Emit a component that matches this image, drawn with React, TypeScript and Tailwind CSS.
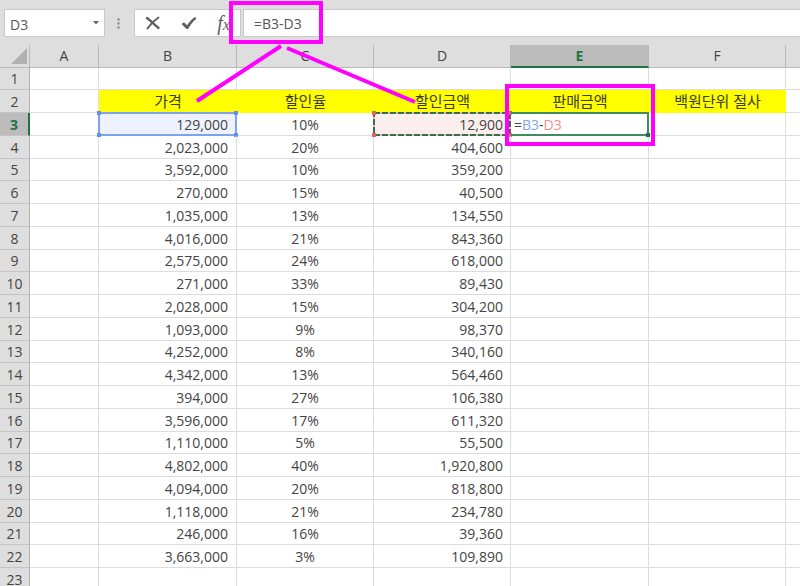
import React from "react";

const columns = ["A", "B", "C", "D", "E", "F", "G"];

const titles: Record<string, string> = {
  B: "가격",
  C: "할인율",
  D: "할인금액",
  E: "판매금액",
  F: "백원단위 절사",
};

const records: [string, string, string][] = [
  ["129,000", "10%", "12,900"],
  ["2,023,000", "20%", "404,600"],
  ["3,592,000", "10%", "359,200"],
  ["270,000", "15%", "40,500"],
  ["1,035,000", "13%", "134,550"],
  ["4,016,000", "21%", "843,360"],
  ["2,575,000", "24%", "618,000"],
  ["271,000", "33%", "89,430"],
  ["2,028,000", "15%", "304,200"],
  ["1,093,000", "9%", "98,370"],
  ["4,252,000", "8%", "340,160"],
  ["4,342,000", "13%", "564,460"],
  ["394,000", "27%", "106,380"],
  ["3,596,000", "17%", "611,320"],
  ["1,110,000", "5%", "55,500"],
  ["4,802,000", "40%", "1,920,800"],
  ["4,094,000", "20%", "818,800"],
  ["1,118,000", "21%", "234,780"],
  ["246,000", "16%", "39,360"],
  ["3,663,000", "3%", "109,890"],
];

const rowNumbers = Array.from({ length: 23 }, (_, i) => i + 1);

function FormulaBar() {
  return (
    <header className="flex h-[45px] items-start pt-[9px] pl-1">
      <div className="flex h-7 w-[101px] shrink-0 items-center border border-[#c8c8c8] bg-white">
        <input
          aria-label="Name box"
          defaultValue="D3"
          className="h-full w-0 flex-1 bg-transparent pt-[3px] pl-[5px] text-[#555] outline-none"
        />
        <button type="button" aria-label="Show names" className="flex h-full w-4 items-center justify-center">
          <svg width="6" height="4" viewBox="0 0 6 4">
            <path d="M0 0H6L3 3.5Z" fill="#666" />
          </svg>
        </button>
      </div>
      <svg width="29" height="28" viewBox="0 0 29 28" className="shrink-0" aria-hidden="true">
        <path d="M13.500 9.500v2M13.500 13.500v2M13.500 17.500v2" stroke="#777" strokeWidth="2" />
      </svg>
      <div className="flex h-7 w-[107px] shrink-0 border border-[#c8c8c8] bg-white text-[#606060]">
        <button type="button" aria-label="Cancel" className="flex w-9 items-center justify-center">
          <svg width="16" height="16" viewBox="0 0 16 16" fill="none" stroke="currentColor" strokeLinecap="round">
            <path d="M2 3C6 6 9 9 13.500 13" strokeWidth="2.400" />
            <path d="M13.500 2.500C9 5.500 5.500 9 2.500 13.500" strokeWidth="2" />
          </svg>
        </button>
        <button type="button" aria-label="Enter" className="flex w-9 items-center justify-center">
          <svg width="16" height="16" viewBox="0 0 16 16">
            <path d="M0.500 9L3 7.200L6 10.300C8.500 6.500 11 4 14 2L15.500 3.500C12 6.500 9.500 9.500 7 14L5.500 14Z" fill="currentColor" />
          </svg>
        </button>
        <button
          type="button"
          aria-label="Insert function"
          className="flex flex-1 items-center justify-center font-['Liberation_Serif',serif] text-xl leading-none italic"
        >
          f<span className="pt-1 text-base">x</span>
        </button>
      </div>
      <input
        aria-label="Formula"
        defaultValue="=B3-D3"
        className="ml-[2px] h-7 min-w-0 flex-1 border border-r-0 border-[#c8c8c8] bg-white pl-[10px] text-[#555] outline-none"
      />
    </header>
  );
}

function SourceOutline() {
  const handle = "absolute size-1 bg-[#6590e8]";
  return (
    <span className="pointer-events-none absolute -inset-px border-2 border-[#7ea2ee]">
      <span className={`${handle} -top-[3px] -left-[3px]`} />
      <span className={`${handle} -top-[3px] -right-[3px]`} />
      <span className={`${handle} -bottom-[3px] -left-[3px]`} />
      <span className={`${handle} -right-[3px] -bottom-[3px]`} />
    </span>
  );
}

function MarchingOutline() {
  const handle = "absolute size-1 bg-[#f06060]";
  return (
    <span className="pointer-events-none absolute top-0 right-0 bottom-0 left-0">
      <svg className="absolute inset-0 size-full overflow-visible" fill="none">
        <rect width="100%" height="100%" stroke="#f6b5b0" strokeWidth="2" />
        <rect width="100%" height="100%" stroke="#32704e" strokeWidth="2" strokeDasharray="6 2" />
      </svg>
      <span className={`${handle} -top-[2px] -left-[2px]`} />
      <span className={`${handle} -top-[2px] -right-[2px]`} />
      <span className={`${handle} -bottom-[2px] -left-[2px]`} />
      <span className={`${handle} -right-[2px] -bottom-[2px]`} />
    </span>
  );
}

function Cell({ col, row }: { col: string; row: number }) {
  const line = col === "G" ? "border-b border-[#dcdcdc]" : "border-r border-b border-[#dcdcdc]";

  if (row === 2 && col in titles) {
    return <td className="bg-[#ffff00] pb-[2px] text-center text-[15px] text-[#3c3c20]">{titles[col]}</td>;
  }

  const record = records[row - 3];
  if (record && col === "B") {
    return (
      <td className={`relative pt-px pr-2 text-right ${line} ${row === 3 ? "bg-[#edf2fe]" : ""}`}>
        {record[0]}
        {row === 3 && <SourceOutline />}
      </td>
    );
  }
  if (record && col === "C") {
    return <td className={`pt-px text-center ${line}`}>{record[1]}</td>;
  }
  if (record && col === "D") {
    return (
      <td className={`relative pt-px pr-[7px] text-right ${line} ${row === 3 ? "bg-[#fdeeee]" : ""}`}>
        {record[2]}
        {row === 3 && <MarchingOutline />}
      </td>
    );
  }
  if (row === 3 && col === "E") {
    return (
      <td className={`relative pt-px pl-[3px] text-left ${line}`}>
        =<span className="text-[#7fa2f7]">B3</span>-<span className="text-[#f58a8a]">D3</span>
        <span className="pointer-events-none absolute -top-px -right-px -bottom-px left-0 border-2 border-l-0 border-[#3f8b62]">
          <span className="absolute -right-[3px] -bottom-[3px] size-1 bg-[#217346]" />
        </span>
      </td>
    );
  }
  return <td className={line} />;
}

function Sheet() {
  return (
    <table className="w-full table-fixed border-separate border-spacing-0 bg-white leading-5">
      <colgroup>
        <col className="w-[30px]" />
        <col className="w-[69px]" />
        <col className="w-[138px]" />
        <col className="w-[137px]" />
        <col className="w-[137px]" />
        <col className="w-[138px]" />
        <col className="w-[137px]" />
        <col />
      </colgroup>
      <thead>
        <tr className="h-[23px] bg-[#dedede]">
          <th className="border-r border-b border-[#b8b8b8] p-0">
            <svg width="16" height="16" viewBox="0 0 16 16" className="ml-auto mr-[2px] block">
              <path d="M16 0V16H0Z" fill="#b2b2b2" />
            </svg>
          </th>
          {columns.map((c) => (
            <th
              key={c}
              scope="col"
              className={
                c === "E"
                  ? "border-r border-b-2 border-r-[#b8b8b8] border-b-[#217346] bg-[#bcbcbc] p-0 font-bold text-[#217346]"
                  : c === "G"
                    ? "border-b border-[#b8b8b8] p-0"
                    : "border-r border-b border-[#b8b8b8] p-0 font-normal"
              }
            >
              {c === "G" ? "" : c}
            </th>
          ))}
        </tr>
      </thead>
      <tbody>
        {rowNumbers.map((n) => (
          <tr key={n} className={n % 4 === 1 ? "h-[22px]" : "h-[23px]"}>
            <th
              scope="row"
              className={
                n === 3
                  ? "border-r-2 border-b border-r-[#217346] border-b-[#c4c4c4] bg-[#bcbcbc] p-0 pt-px font-bold text-[#217346]"
                  : "border-r border-b border-r-[#b0b0b0] border-b-[#c4c4c4] bg-[#dedede] p-0 pt-px font-normal"
              }
            >
              {n}
            </th>
            {columns.map((c) => (
              <Cell key={c} col={c} row={n} />
            ))}
          </tr>
        ))}
      </tbody>
    </table>
  );
}

function Annotations() {
  return (
    <svg
      className="pointer-events-none absolute top-0 left-0"
      width="660"
      height="150"
      viewBox="0 0 660 150"
      fill="none"
      stroke="#ff00ff"
      strokeWidth="4"
      aria-hidden="true"
    >
      <rect x="231" y="3" width="90" height="39" />
      <rect x="507" y="86" width="146" height="58" />
      <path d="M281 46L197 101M287 48L415 102" />
    </svg>
  );
}

export default function App() {
  return (
    <main className="relative h-screen overflow-hidden bg-[#dedede] font-['Open_Sans','Noto_Sans_CJK_KR',sans-serif] text-sm text-[#444]">
      <FormulaBar />
      <Sheet />
      <Annotations />
    </main>
  );
}
